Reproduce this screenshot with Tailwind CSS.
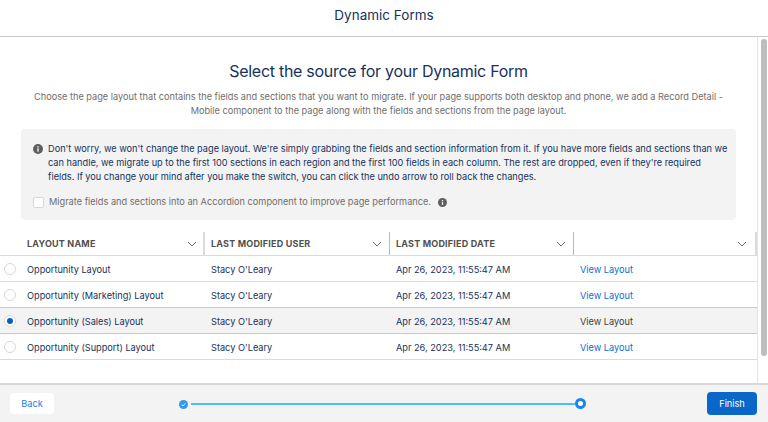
<!DOCTYPE html>
<html lang="en">
<head>
  <meta charset="UTF-8">
  <meta name="viewport" content="width=device-width, initial-scale=1.0">
  <title>Dynamic Forms</title>
  <script src="https://cdn.jsdelivr.net/npm/@tailwindcss/browser@4"></script>
</head>
<body class="bg-white font-['Inter',sans-serif] h-[422px] w-[768px] overflow-hidden">
  <!-- Header -->
  <header class="h-[37px] flex items-center justify-center border-b border-[#c9c9c9] pb-[6px]">
    <h1 class="text-[13.5px] text-[#16325c]">Dynamic Forms</h1>
  </header>

  <div class="flex h-[346px]">
    <main class="w-[757px]">
      <h2 class="mt-[24px] text-center text-[16px] tracking-[-0.28px] leading-[20px] text-[#16325c]">Select the source for your Dynamic Form</h2>
      <p class="mt-[9px] mx-[30px] text-center text-[#706e6b] text-[9.2px] leading-[14px]">Choose the page layout that contains the fields and sections that you want to migrate. If your page supports both desktop and phone, we add a Record Detail - Mobile component to the page along with the fields and sections from the page layout.</p>

      <!-- Info box -->
      <section class="mt-[11px] ml-[21px] w-[715px] h-[91px] bg-[#f3f3f3] rounded pt-[13px] pl-[12px] pr-[7px]">
        <div class="flex gap-[5px]">
          <svg class="w-[10px] h-[10px] mt-[2px] shrink-0" viewBox="0 0 10 10"><circle cx="5" cy="5" r="5" fill="#5f5f5f"/><rect x="4.3" y="4.3" width="1.4" height="3.4" fill="#f3f3f3"/><rect x="4.3" y="2.2" width="1.4" height="1.3" fill="#f3f3f3"/></svg>
          <p class="text-[#16325c] text-[9.2px] leading-[14px]">Don't worry, we won't change the page layout. We're simply grabbing the fields and section information from it. If you have more fields and sections than we can handle, we migrate up to the first 100 sections in each region and the first 100 fields in each column. The rest are dropped, even if they're required fields. If you change your mind after you make the switch, you can click the undo arrow to roll back the changes.</p>
        </div>
        <div class="flex items-center mt-[11px]">
          <span class="w-[11px] h-[11px] bg-white border border-[#d8d8d8] rounded-[2px] shrink-0"></span>
          <span class="ml-[5px] text-[#706e6b] text-[9.2px] leading-[14px]">Migrate fields and sections into an Accordion component to improve page performance.</span>
          <svg class="w-[9px] h-[9px] ml-[7px]" viewBox="0 0 10 10"><circle cx="5" cy="5" r="5" fill="#5f5f5f"/><rect x="4.3" y="4.3" width="1.4" height="3.4" fill="#f3f3f3"/><rect x="4.3" y="2.2" width="1.4" height="1.3" fill="#f3f3f3"/></svg>
        </div>
      </section>

      <!-- Table -->
      <div class="mt-[12px] text-[9.2px]">
        <div class="grid grid-cols-[205px_185px_184px_183px] h-[24px] border-b border-[#dddbda] text-[#514f4d] font-bold text-[9px] tracking-[0.2px]">
          <div class="flex items-center justify-between pl-[27px] pr-[6px] border-r-2 border-[#dddbda]">LAYOUT NAME
            <svg class="w-[10px] h-[6px]" viewBox="0 0 10 6" fill="none" stroke="#706e6b"><path d="M1 1l4 4 4-4"/></svg></div>
          <div class="flex items-center justify-between pl-[6px] pr-[7px] border-r border-[#b8b8b8]">LAST MODIFIED USER
            <svg class="w-[10px] h-[6px]" viewBox="0 0 10 6" fill="none" stroke="#706e6b"><path d="M1 1l4 4 4-4"/></svg></div>
          <div class="flex items-center justify-between pl-[6px] pr-[7px] border-r border-[#b8b8b8]">LAST MODIFIED DATE
            <svg class="w-[10px] h-[6px]" viewBox="0 0 10 6" fill="none" stroke="#706e6b"><path d="M1 1l4 4 4-4"/></svg></div>
          <div class="flex items-center justify-end pr-[8px] border-r-2 border-[#dddbda]">
            <svg class="w-[10px] h-[6px]" viewBox="0 0 10 6" fill="none" stroke="#706e6b"><path d="M1 1l4 4 4-4"/></svg></div>
        </div>

        <div class="grid grid-cols-[205px_185px_184px_183px] h-[26px] pt-[2px] items-center border-b border-[#dddbda] text-[#16325c]">
          <div class="flex items-center"><span class="ml-[4px] w-[12px] h-[12px] rounded-full border border-[#d8d8d8] bg-white"></span><span class="ml-[11px]">Opportunity Layout</span></div>
          <div class="pl-[6px]">Stacy O'Leary</div>
          <div class="pl-[6px]">Apr 26, 2023, 11:55:47 AM</div>
          <div class="pl-[6px] text-[#0b6fd3]">View Layout</div>
        </div>
        <div class="grid grid-cols-[205px_185px_184px_183px] h-[26px] pt-[2px] items-center border-b border-[#c9c9c9] text-[#16325c]">
          <div class="flex items-center"><span class="ml-[4px] w-[12px] h-[12px] rounded-full border border-[#d8d8d8] bg-white"></span><span class="ml-[11px]">Opportunity (Marketing) Layout</span></div>
          <div class="pl-[6px]">Stacy O'Leary</div>
          <div class="pl-[6px]">Apr 26, 2023, 11:55:47 AM</div>
          <div class="pl-[6px] text-[#0b6fd3]">View Layout</div>
        </div>
        <div class="grid grid-cols-[205px_185px_184px_183px] h-[26px] pt-[2px] items-center border-b border-[#c9c9c9] bg-[#f3f3f3] text-[#16325c]">
          <div class="flex items-center"><span class="ml-[4px] w-[12px] h-[12px] rounded-full border border-[#d8d8d8] bg-white flex items-center justify-center"><span class="w-[6px] h-[6px] rounded-full bg-[#0b5cc4]"></span></span><span class="ml-[11px]">Opportunity (Sales) Layout</span></div>
          <div class="pl-[6px]">Stacy O'Leary</div>
          <div class="pl-[6px]">Apr 26, 2023, 11:55:47 AM</div>
          <div class="pl-[6px] text-[#3e3e3c]">View Layout</div>
        </div>
        <div class="grid grid-cols-[205px_185px_184px_183px] h-[26px] pt-[2px] items-center border-b border-[#dddbda] text-[#16325c]">
          <div class="flex items-center"><span class="ml-[4px] w-[12px] h-[12px] rounded-full border border-[#d8d8d8] bg-white"></span><span class="ml-[11px]">Opportunity (Support) Layout</span></div>
          <div class="pl-[6px]">Stacy O'Leary</div>
          <div class="pl-[6px]">Apr 26, 2023, 11:55:47 AM</div>
          <div class="pl-[6px] text-[#0b6fd3]">View Layout</div>
        </div>
      </div>
    </main>

    <!-- Scrollbar -->
    <div class="w-[11px] pl-[3px] border-l border-[#e5e5e5] pt-[2px]">
      <div class="w-[6px] h-[317px] rounded-full bg-[#bdbdbd]"></div>
    </div>
  </div>

  <!-- Footer -->
  <footer class="h-[39px] bg-[#f3f3f3] border-t-2 border-[#d8d8d8] flex items-center justify-between pl-[10px] pr-[11px]">
    <button class="w-[44px] h-[21px] bg-white rounded text-[#1b7fe0] text-[9.2px]">Back</button>
    <div class="flex items-center ml-[4px]">
      <svg class="w-[9px] h-[9px] mt-[1px]" viewBox="0 0 10 10"><circle cx="5" cy="5" r="5" fill="#2d9cf0"/><path d="M3 5.2l1.5 1.4L7 3.8" fill="none" stroke="#fff" stroke-width="1"/></svg>
      <div class="ml-[3px] w-[384px] h-[2px] bg-[#4dbcff]"></div>
      <span class="w-[11px] h-[11px] rounded-full border-[3px] border-[#1b86e6] bg-white"></span>
    </div>
    <button class="w-[50px] h-[23px] bg-[#0b66c9] rounded text-white text-[9.2px]">Finish</button>
  </footer>
</body>
</html>
